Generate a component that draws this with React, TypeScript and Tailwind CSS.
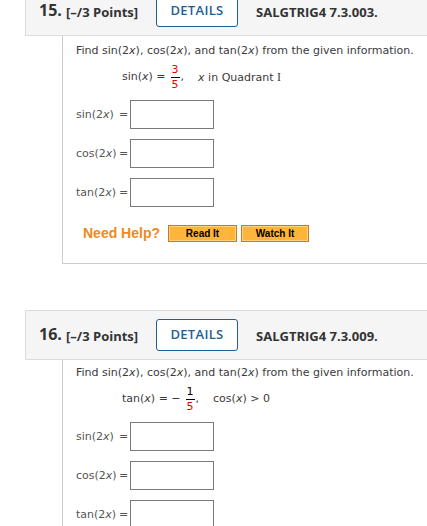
import React from 'react';

interface IAnswer {
  name: string;
}

const answers: IAnswer[] = [{ name: 'sin' }, { name: 'cos' }, { name: 'tan' }];

function Header({ num, code }: { num: number; code: string }) {
  return (
    <div className="flex items-center h-[50px] bg-[#f5f5f5] border border-r-0 border-[#dcdcdc] pl-[13px] font-['Open_Sans',sans-serif] text-[#333]">
      <span className="text-[16px] leading-none font-bold w-[27px] -mt-[2px]">{num}.</span>
      <span className="text-[13px] leading-none font-bold w-[90px] mt-[2px]">[–/3 Points]</span>
      <button className="h-[32px] w-[82px] rounded-[3px] border border-[#1f5f96] bg-white text-[13px] font-semibold text-[#1f5f96] tracking-[0.3px]">
        DETAILS
      </button>
      <span className="ml-[18px] text-[13px] leading-none font-bold mt-[2px]">{code}</span>
    </div>
  );
}

function Frac({ top, topRed }: { top: string; topRed: boolean }) {
  return (
    <span className="inline-flex flex-col items-center leading-[10px] ml-[5px] mr-[1px]">
      <span className={topRed ? 'text-[#ee0000]' : 'text-black'}>{top}</span>
      <span className="block w-[9px] h-[1px] bg-black my-[2px]"></span>
      <span className="text-[#ee0000]">5</span>
    </span>
  );
}

function Inputs() {
  return (
    <div className="flex flex-col gap-[10px]">
      {answers.map((a) => (
        <div key={a.name} className="flex items-center text-[#555]">
          <span className="w-[43px] pt-[2px]">
            {a.name}(2<i>x</i>)
          </span>
          <span className="pt-[2px]">=</span>
          <div className="ml-[2px] w-[84px] h-[29px] border border-[#7a7a7a] bg-white"></div>
        </div>
      ))}
    </div>
  );
}

function App() {
  return (
    <div className="w-[427px] h-[526px] overflow-hidden bg-white">
      <div className="-mt-[14px] pl-[25px] font-['DejaVu_Sans',sans-serif] text-[11px]">
        <Header num={15} code="SALGTRIG4 7.3.003." />
        <div className="ml-[37px] border-l border-b border-[#cccccc] pl-[13px] pt-[8px] h-[228px]">
          <p className="text-[#3a3a3a] leading-[14px]">
            Find sin(2<i>x</i>), cos(2<i>x</i>), and tan(2<i>x</i>) from the given information.
          </p>
          <div className="flex items-center h-[26px] mt-[6px] pl-[46px] text-[#3a3a3a]">
            <span>
              sin(<i>x</i>) =
            </span>
            <Frac top="3" topRed={true} />
            <span>,</span>
            <span className="ml-[14px]">
              <i>x</i> in Quadrant <span className="font-['Liberation_Serif',serif] text-[12px]">I</span>
            </span>
          </div>
          <div className="mt-[10px]">
            <Inputs />
          </div>
          <div className="flex items-center mt-[16px] ml-[7px]">
            <span className="font-['Liberation_Sans',sans-serif] font-bold text-[14px] text-[#f0891a] mr-[8px]">
              Need Help?
            </span>
            <button className="w-[69px] h-[17px] border border-[#c47a2c] bg-[#ffb43c] shadow-[inset_0_0_0_1px_#ffd27c] font-['Liberation_Sans',sans-serif] font-bold text-[10px] text-black leading-none">
              Read It
            </button>
            <button className="ml-[4px] w-[68px] h-[17px] border border-[#c47a2c] bg-[#ffb43c] shadow-[inset_0_0_0_1px_#ffd27c] font-['Liberation_Sans',sans-serif] font-bold text-[10px] text-black leading-none">
              Watch It
            </button>
          </div>
        </div>
        <div className="mt-[46px]">
          <Header num={16} code="SALGTRIG4 7.3.009." />
          <div className="ml-[37px] border-l border-[#cccccc] pl-[13px] pt-[6px] h-[200px]">
            <p className="text-[#3a3a3a] leading-[14px]">
              Find sin(2<i>x</i>), cos(2<i>x</i>), and tan(2<i>x</i>) from the given information.
            </p>
            <div className="flex items-center h-[26px] mt-[6px] pl-[46px] text-[#3a3a3a]">
              <span>
                tan(<i>x</i>) = −
              </span>
              <Frac top="1" topRed={false} />
              <span>,</span>
              <span className="ml-[14px]">
                cos(<i>x</i>) &gt; 0
              </span>
            </div>
            <div className="mt-[10px]">
              <Inputs />
            </div>
          </div>
        </div>
      </div>
    </div>
  );
}

export default App;
